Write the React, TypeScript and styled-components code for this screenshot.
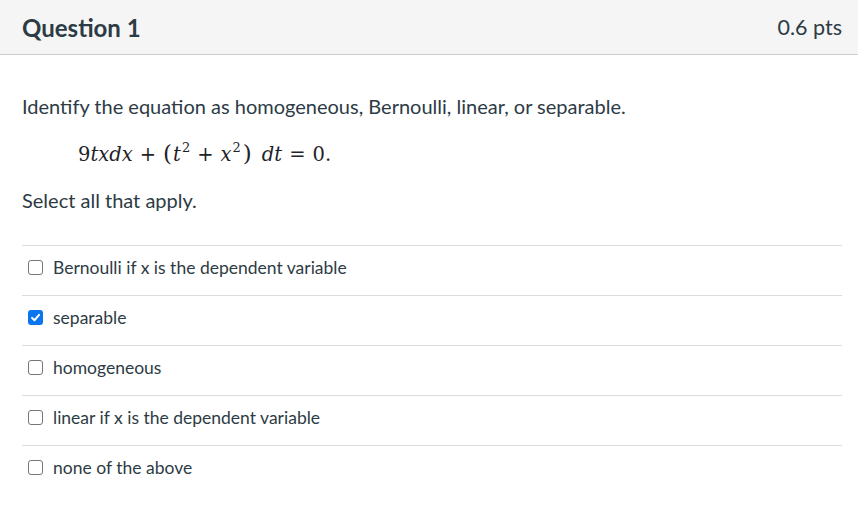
import styled, { createGlobalStyle } from "styled-components";

const GlobalStyle = createGlobalStyle`
  body {
    margin: 0;
    background: #ffffff;
    font-family: Lato, "Open Sans", sans-serif;
    color: #2d3b45;
  }
`;

type Option = {
  label: string;
  checked?: boolean;
};

const options: Option[] = [
  { label: "Bernoulli if x is the dependent variable" },
  { label: "separable", checked: true },
  { label: "homogeneous" },
  { label: "linear if x is the dependent variable" },
  { label: "none of the above" },
];

const Page = styled.div`
  width: 858px;
  height: 507px;
  overflow: hidden;
`;

const Header = styled.header`
  display: flex;
  align-items: center;
  justify-content: space-between;
  height: 55px;
  padding: 0 16px 0 22px;
  background: #f5f5f5;
  border-bottom: 1px solid #c7cdd1;
  box-sizing: border-box;
`;

const Title = styled.h2`
  margin: 0;
  font-size: 24px;
  font-weight: 700;
  color: #2d3b45;
`;

const Points = styled.span`
  font-size: 21.5px;
  font-weight: 400;
  color: #2d3b45;
`;

const Body = styled.section`
  padding: 38px 16px 0 22px;
`;

const Paragraph = styled.p`
  margin: 0;
  font-size: 20px;
  line-height: 26px;
`;

const Equation = styled.div`
  display: flex;
  align-items: baseline;
  height: 26px;
  margin: 21px 0 21px 56px;
  font-family: "DejaVu Serif", "Liberation Serif", serif;
  font-size: 19.5px;
  line-height: 26px;
  color: #1f2328;
  white-space: nowrap;
`;

const Var = styled.i`
  font-family: "DejaVu Serif", serif;
  font-size: 19.5px;
  font-style: italic;
`;

const Num = styled.span`
  font-family: "DejaVu Serif", serif;
  font-size: 19.5px;
`;

const Op = styled.span`
  font-family: "DejaVu Serif", serif;
  font-size: 19.5px;
  margin: 0 7px;
`;

const Paren = styled.span<{ $after?: boolean }>`
  font-family: "DejaVu Serif", serif;
  font-size: 23px;
  font-weight: 300;
  margin-right: ${(p) => (p.$after ? "10px" : "1px")};
  margin-left: ${(p) => (p.$after ? "2px" : "0")};
`;

const Sup = styled.span`
  font-family: "DejaVu Serif", serif;
  font-size: 13px;
  font-style: normal;
  position: relative;
  top: -9px;
  margin-left: 1px;
`;

const OptionList = styled.ul`
  list-style: none;
  margin: 32px 0 0;
  padding: 0;
`;

const OptionRow = styled.li`
  display: flex;
  align-items: center;
  gap: 10px;
  height: 50px;
  padding: 0 0 6px 6px;
  border-top: 1px solid #dcdcdc;
  box-sizing: border-box;
  font-size: 17.5px;
`;

const Box = styled.span<{ $checked?: boolean }>`
  display: inline-flex;
  align-items: center;
  justify-content: center;
  width: 15px;
  height: 15px;
  box-sizing: border-box;
  border-radius: 3px;
  border: ${(p) => (p.$checked ? "none" : "1.5px solid #767676")};
  background: ${(p) => (p.$checked ? "#0b75f0" : "#ffffff")};
  flex-shrink: 0;
`;

const Check = () => (
  <svg width="11" height="11" viewBox="0 0 12 12">
    <path
      d="M2.2 6.4 L4.9 9 L9.9 3.2"
      fill="none"
      stroke="#ffffff"
      strokeWidth="2.2"
      strokeLinecap="round"
      strokeLinejoin="round"
    />
  </svg>
);

export default function App() {
  return (
    <Page>
      <GlobalStyle />
      <Header>
        <Title>Question 1</Title>
        <Points>0.6 pts</Points>
      </Header>
      <Body>
        <Paragraph>
          Identify the equation as homogeneous, Bernoulli, linear, or separable.
        </Paragraph>
        <Equation>
          <Num>9</Num>
          <Var>txdx</Var>
          <Op>+</Op>
          <Paren>(</Paren>
          <Var>t</Var>
          <Sup>2</Sup>
          <Op>+</Op>
          <Var>x</Var>
          <Sup>2</Sup>
          <Paren $after>)</Paren>
          <Var>dt</Var>
          <Op>=</Op>
          <Num>0.</Num>
        </Equation>
        <Paragraph>Select all that apply.</Paragraph>
        <OptionList>
          {options.map((o) => (
            <OptionRow key={o.label}>
              <Box $checked={o.checked}>{o.checked && <Check />}</Box>
              {o.label}
            </OptionRow>
          ))}
        </OptionList>
      </Body>
    </Page>
  );
}
